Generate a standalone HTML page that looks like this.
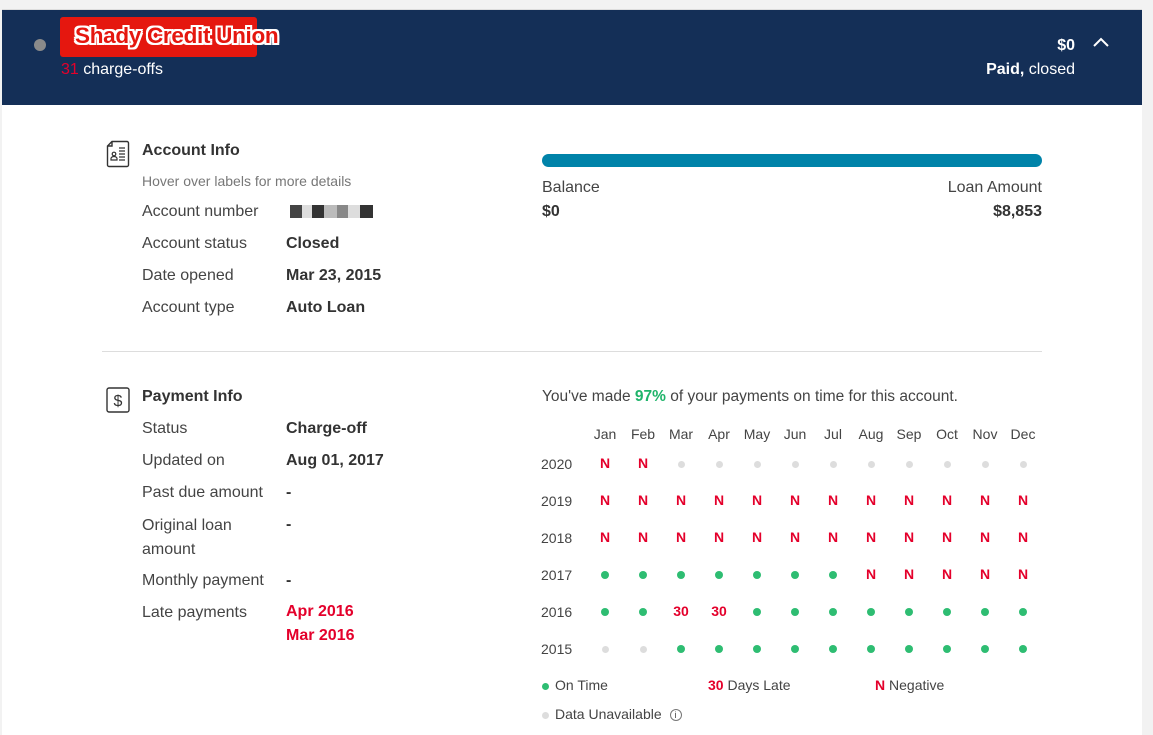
<!DOCTYPE html>
<html><head><meta charset="utf-8"><style>
*{margin:0;padding:0;box-sizing:border-box}
body{width:1153px;height:735px;overflow:hidden;background:#f2f2f2;font-family:"Liberation Sans",sans-serif;color:#333;position:relative}
.a{position:absolute;white-space:nowrap}
.panel{position:absolute;left:2px;top:9px;width:1140px;height:726px;background:#fff;border-top:1px solid #ddd}
.hdr{position:absolute;left:2px;top:10px;width:1140px;height:95px;background:#142f57}
.l{font-size:16px;color:#444}
.v{font-size:16px;font-weight:bold;color:#333}
.b{font-weight:bold}
.r{color:#e4002b}
.g{color:#1fb46a}
.m{font-size:14px;color:#444;width:38px;text-align:center}
.c{width:38px;text-align:center;font-size:14px;font-weight:bold;color:#e4002b}
.d{display:inline-block;width:8px;height:8px;border-radius:50%;background:#2ebd72}
.u{display:inline-block;width:7px;height:7px;border-radius:50%;background:#ddd}
.y{font-size:14px;color:#444}
</style></head><body>
<div class="panel"></div>
<div class="hdr"></div>
<div class="a" style="left:34px;top:39px;width:12px;height:12px;border-radius:50%;background:#8a8a8a"></div>
<div class="a" style="left:60px;top:17px;width:197px;height:40px;background:#e5170f;border-radius:3px"></div>
<div class="a" style="left:75px;top:23px;font-size:22.5px;font-weight:bold;letter-spacing:-0.3px;color:#e5170f;text-shadow:-2px -2px 0 #fff,2px -2px 0 #fff,-2px 2px 0 #fff,2px 2px 0 #fff,0 2px 0 #fff,0 -2px 0 #fff,2px 0 0 #fff,-2px 0 0 #fff">Shady Credit Union</div>
<div class="a" style="left:61px;top:61px;font-size:16px;color:#fff"><span class="r">31</span> charge-offs</div>
<div class="a" style="right:78px;top:37px;font-size:16px;font-weight:bold;color:#fff">$0</div>
<svg class="a" style="left:1092px;top:36px" width="18" height="12"><path d="M2 10 L9 3 L16 10" stroke="#fff" stroke-width="2" fill="none"/></svg>
<div class="a" style="right:78px;top:61px;font-size:16px;color:#fff"><b>Paid,</b> closed</div>

<svg class="a" style="left:106px;top:140px" width="24" height="28" viewBox="0 0 24 28"><path d="M6 1.5h15a1.5 1.5 0 0 1 1.5 1.5v22a1.5 1.5 0 0 1-1.5 1.5H3a1.5 1.5 0 0 1-1.5-1.5V6z M6 1.5v4.5H1.5" fill="none" stroke="#333" stroke-width="1.4"/><circle cx="8" cy="14" r="1.8" fill="none" stroke="#333" stroke-width="1.2"/><path d="M5 20h6v-1.5a3 2 0 0 0-6 0z" fill="none" stroke="#333" stroke-width="1.2"/><path d="M13 8h6M13 11h6M13 14h6M13 17h6M13 20h6" stroke="#333" stroke-width="1.2"/></svg>
<div class="a v" style="left:142px;top:142px">Account Info</div>
<div class="a" style="left:142px;top:173px;font-size:14px;color:#777">Hover over labels for more details</div>
<div class="a l" style="left:142px;top:203px">Account number</div>
<div class="a" style="left:290px;top:205px;width:83px;height:13px;background:linear-gradient(90deg,#444 0 12px,#ddd 12px 22px,#333 22px 34px,#bbb 34px 47px,#888 47px 58px,#ddd 58px 70px,#333 70px 83px)"></div>
<div class="a l" style="left:142px;top:235px">Account status</div><div class="a v" style="left:286px;top:235px">Closed</div>
<div class="a l" style="left:142px;top:267px">Date opened</div><div class="a v" style="left:286px;top:267px">Mar 23, 2015</div>
<div class="a l" style="left:142px;top:299px">Account type</div><div class="a v" style="left:286px;top:299px">Auto Loan</div>

<div class="a" style="left:542px;top:154px;width:500px;height:13px;background:#0083a9;border-radius:7px"></div>
<div class="a l" style="left:542px;top:179px">Balance</div>
<div class="a v" style="left:542px;top:203px">$0</div>
<div class="a l" style="right:111px;top:179px">Loan Amount</div>
<div class="a v" style="right:111px;top:203px">$8,853</div>

<div class="a" style="left:102px;top:351px;width:940px;height:1px;background:#ddd"></div>

<svg class="a" style="left:106px;top:387px" width="24" height="26"><rect x="1" y="1" width="22" height="24" rx="2" fill="none" stroke="#333" stroke-width="1.4"/><text x="12" y="19" font-size="16" text-anchor="middle" fill="#333" font-family="Liberation Sans">$</text></svg>
<div class="a v" style="left:142px;top:388px">Payment Info</div>
<div class="a l" style="left:142px;top:420px">Status</div><div class="a v" style="left:286px;top:420px">Charge-off</div>
<div class="a l" style="left:142px;top:452px">Updated on</div><div class="a v" style="left:286px;top:452px">Aug 01, 2017</div>
<div class="a l" style="left:142px;top:484px">Past due amount</div><div class="a v" style="left:286px;top:484px">-</div>
<div class="a l" style="left:142px;top:514px;line-height:24px">Original loan<br>amount</div><div class="a v" style="left:286px;top:516px">-</div>
<div class="a l" style="left:142px;top:572px">Monthly payment</div><div class="a v" style="left:286px;top:572px">-</div>
<div class="a l" style="left:142px;top:604px">Late payments</div>
<div class="a v r" style="left:286px;top:600px;line-height:24px;color:#e4002b">Apr 2016<br>Mar 2016</div>

<div class="a l" style="left:542px;top:388px;font-size:15.5px">You've made <b class="g">97%</b> of your payments on time for this account.</div>

<div class="a" style="left:586px;top:426px;display:flex"><div class="m">Jan</div><div class="m">Feb</div><div class="m">Mar</div><div class="m">Apr</div><div class="m">May</div><div class="m">Jun</div><div class="m">Jul</div><div class="m">Aug</div><div class="m">Sep</div><div class="m">Oct</div><div class="m">Nov</div><div class="m">Dec</div></div>

<div class="a y" style="left:541px;top:456px">2020</div>
<div class="a" style="left:586px;top:455px;display:flex;align-items:center;height:16px"><div class="c">N</div><div class="c">N</div><div class="c"><i class="u"></i></div><div class="c"><i class="u"></i></div><div class="c"><i class="u"></i></div><div class="c"><i class="u"></i></div><div class="c"><i class="u"></i></div><div class="c"><i class="u"></i></div><div class="c"><i class="u"></i></div><div class="c"><i class="u"></i></div><div class="c"><i class="u"></i></div><div class="c"><i class="u"></i></div></div>

<div class="a y" style="left:541px;top:493px">2019</div>
<div class="a" style="left:586px;top:492px;display:flex;align-items:center;height:16px"><div class="c">N</div><div class="c">N</div><div class="c">N</div><div class="c">N</div><div class="c">N</div><div class="c">N</div><div class="c">N</div><div class="c">N</div><div class="c">N</div><div class="c">N</div><div class="c">N</div><div class="c">N</div></div>

<div class="a y" style="left:541px;top:530px">2018</div>
<div class="a" style="left:586px;top:529px;display:flex;align-items:center;height:16px"><div class="c">N</div><div class="c">N</div><div class="c">N</div><div class="c">N</div><div class="c">N</div><div class="c">N</div><div class="c">N</div><div class="c">N</div><div class="c">N</div><div class="c">N</div><div class="c">N</div><div class="c">N</div></div>

<div class="a y" style="left:541px;top:567px">2017</div>
<div class="a" style="left:586px;top:566px;display:flex;align-items:center;height:16px"><div class="c"><i class="d"></i></div><div class="c"><i class="d"></i></div><div class="c"><i class="d"></i></div><div class="c"><i class="d"></i></div><div class="c"><i class="d"></i></div><div class="c"><i class="d"></i></div><div class="c"><i class="d"></i></div><div class="c">N</div><div class="c">N</div><div class="c">N</div><div class="c">N</div><div class="c">N</div></div>

<div class="a y" style="left:541px;top:604px">2016</div>
<div class="a" style="left:586px;top:603px;display:flex;align-items:center;height:16px"><div class="c"><i class="d"></i></div><div class="c"><i class="d"></i></div><div class="c">30</div><div class="c">30</div><div class="c"><i class="d"></i></div><div class="c"><i class="d"></i></div><div class="c"><i class="d"></i></div><div class="c"><i class="d"></i></div><div class="c"><i class="d"></i></div><div class="c"><i class="d"></i></div><div class="c"><i class="d"></i></div><div class="c"><i class="d"></i></div></div>

<div class="a y" style="left:541px;top:641px">2015</div>
<div class="a" style="left:586px;top:640px;display:flex;align-items:center;height:16px"><div class="c"><i class="u"></i></div><div class="c"><i class="u"></i></div><div class="c"><i class="d"></i></div><div class="c"><i class="d"></i></div><div class="c"><i class="d"></i></div><div class="c"><i class="d"></i></div><div class="c"><i class="d"></i></div><div class="c"><i class="d"></i></div><div class="c"><i class="d"></i></div><div class="c"><i class="d"></i></div><div class="c"><i class="d"></i></div><div class="c"><i class="d"></i></div></div>

<div class="a" style="left:542px;top:677px;font-size:14px;color:#444"><i class="d" style="width:7px;height:7px;margin-right:6px"></i>On Time</div>
<div class="a" style="left:708px;top:677px;font-size:14px;color:#444"><b class="r">30</b> Days Late</div>
<div class="a" style="left:875px;top:677px;font-size:14px;color:#444"><b class="r">N</b> Negative</div>
<div class="a" style="left:542px;top:706px;font-size:14px;color:#444"><i class="u" style="margin-right:6px"></i>Data Unavailable <span style="display:inline-block;width:12px;height:12px;border:1px solid #777;border-radius:50%;font-size:9px;text-align:center;line-height:10px;margin-left:4px;vertical-align:1px">i</span></div>
</body></html>
